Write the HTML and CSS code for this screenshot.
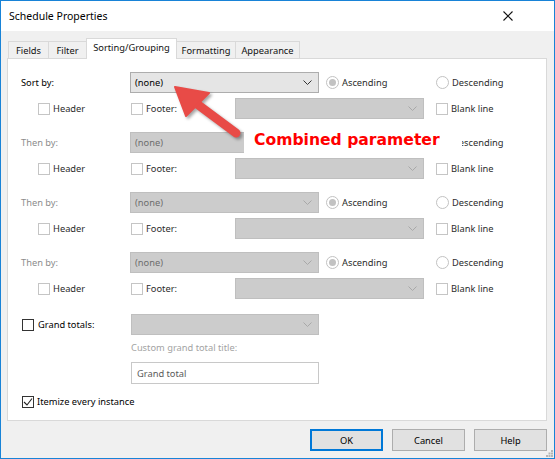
FILE: index.html
```html
<!DOCTYPE html>
<html lang="en">
<head>
  <meta charset="UTF-8">
  <title>Schedule Properties</title>
  <link rel="stylesheet" href="styles.css">
</head>
<body>
  <div class="window">
    <div class="titlebar">
      <span class="title">Schedule Properties</span>
      <svg class="close" width="10" height="10" viewBox="0 0 10 10">
        <path d="M0.5 0.5 L9.5 9.5 M9.5 0.5 L0.5 9.5" stroke="#111" stroke-width="1.1" fill="none"/>
      </svg>
    </div>

    <div class="body">
      <div class="tabs">
        <div class="tab tab-fields">Fields</div>
        <div class="tab tab-filter">Filter</div>
        <div class="tab tab-sorting active">Sorting/Grouping</div>
        <div class="tab tab-format">Formatting</div>
        <div class="tab tab-look">Appearance</div>
      </div>

      <div class="panel">
        <div class="groups">
          <!-- sort by -->
          <div class="group">
            <div class="row row-main">
              <span class="lbl">Sort by:</span>
              <div class="combo on"><span>(none)</span><svg class="chev" width="9" height="5" viewBox="0 0 9 5"><path d="M0.5 0.5 L4.5 4.5 L8.5 0.5" fill="none" stroke="#333"/></svg></div>
              <span class="radio"><span class="dot on"></span>Ascending</span>
              <span class="radio"><span class="dot"></span>Descending</span>
            </div>
            <div class="row row-sub">
              <span class="check c-header"><span class="box"></span>Header</span>
              <span class="check c-footer"><span class="box"></span>Footer:</span>
              <div class="combo wide"><span></span><svg class="chev" width="9" height="5" viewBox="0 0 9 5"><path d="M0.5 0.5 L4.5 4.5 L8.5 0.5" fill="none" stroke="#a8a8a8"/></svg></div>
              <span class="check"><span class="box"></span>Blank line</span>
            </div>
          </div>

          <div class="group">
            <div class="row row-main">
              <span class="lbl off">Then by:</span>
              <div class="combo"><span>(none)</span><svg class="chev" width="9" height="5" viewBox="0 0 9 5"><path d="M0.5 0.5 L4.5 4.5 L8.5 0.5" fill="none" stroke="#a8a8a8"/></svg></div>
              <span class="radio"><span class="dot on"></span>Ascending</span>
              <span class="radio"><span class="dot"></span>Descending</span>
            </div>
            <div class="row row-sub">
              <span class="check c-header"><span class="box"></span>Header</span>
              <span class="check c-footer"><span class="box"></span>Footer:</span>
              <div class="combo wide"><span></span><svg class="chev" width="9" height="5" viewBox="0 0 9 5"><path d="M0.5 0.5 L4.5 4.5 L8.5 0.5" fill="none" stroke="#a8a8a8"/></svg></div>
              <span class="check"><span class="box"></span>Blank line</span>
            </div>
          </div>

          <div class="group">
            <div class="row row-main">
              <span class="lbl off">Then by:</span>
              <div class="combo"><span>(none)</span><svg class="chev" width="9" height="5" viewBox="0 0 9 5"><path d="M0.5 0.5 L4.5 4.5 L8.5 0.5" fill="none" stroke="#a8a8a8"/></svg></div>
              <span class="radio"><span class="dot on"></span>Ascending</span>
              <span class="radio"><span class="dot"></span>Descending</span>
            </div>
            <div class="row row-sub">
              <span class="check c-header"><span class="box"></span>Header</span>
              <span class="check c-footer"><span class="box"></span>Footer:</span>
              <div class="combo wide"><span></span><svg class="chev" width="9" height="5" viewBox="0 0 9 5"><path d="M0.5 0.5 L4.5 4.5 L8.5 0.5" fill="none" stroke="#a8a8a8"/></svg></div>
              <span class="check"><span class="box"></span>Blank line</span>
            </div>
          </div>

          <div class="group">
            <div class="row row-main">
              <span class="lbl off">Then by:</span>
              <div class="combo"><span>(none)</span><svg class="chev" width="9" height="5" viewBox="0 0 9 5"><path d="M0.5 0.5 L4.5 4.5 L8.5 0.5" fill="none" stroke="#a8a8a8"/></svg></div>
              <span class="radio"><span class="dot on"></span>Ascending</span>
              <span class="radio"><span class="dot"></span>Descending</span>
            </div>
            <div class="row row-sub">
              <span class="check c-header"><span class="box"></span>Header</span>
              <span class="check c-footer"><span class="box"></span>Footer:</span>
              <div class="combo wide"><span></span><svg class="chev" width="9" height="5" viewBox="0 0 9 5"><path d="M0.5 0.5 L4.5 4.5 L8.5 0.5" fill="none" stroke="#a8a8a8"/></svg></div>
              <span class="check"><span class="box"></span>Blank line</span>
            </div>
          </div>
        </div>

        <!-- grand totals -->
        <div class="totals">
          <div class="row">
            <span class="check c-totals"><span class="box on"></span>Grand totals:</span>
            <div class="combo short"><span></span><svg class="chev" width="9" height="5" viewBox="0 0 9 5"><path d="M0.5 0.5 L4.5 4.5 L8.5 0.5" fill="none" stroke="#a8a8a8"/></svg></div>
          </div>
          <div class="custom-title">Custom grand total title:</div>
          <div class="textbox">Grand total</div>
          <div class="itemize">
            <span class="check"><span class="box on">
              <svg width="10" height="10" viewBox="0 0 10 10"><path d="M1 5 L4 8 L9 1.5" fill="none" stroke="#222" stroke-width="1.1"/></svg>
            </span>Itemize every instance</span>
          </div>
        </div>

        <!-- annotation on top of the dialog -->
        <svg class="arrow" width="90" height="64" viewBox="162 78 90 64">
          <path d="M197 104 L236 133" stroke="#e84b47" stroke-width="9" stroke-linecap="round" fill="none"/>
          <path d="M175 87 L209 93 L186 116 Z" fill="#e84b47" stroke="#e84b47" stroke-width="2" stroke-linejoin="round"/>
        </svg>
        <div class="callout">Combined parameter</div>
      </div>

      <div class="buttons">
        <div class="btn primary">OK</div>
        <div class="btn">Cancel</div>
        <div class="btn">Help</div>
      </div>
    </div>

    <svg class="grip" width="7" height="7" viewBox="0 0 7 7">
      <rect x="5" y="0" width="2" height="2" fill="#b5b5b5"/>
      <rect x="2.5" y="2.5" width="2" height="2" fill="#b5b5b5"/>
      <rect x="5" y="2.5" width="2" height="2" fill="#b5b5b5"/>
      <rect x="0" y="5" width="2" height="2" fill="#b5b5b5"/>
      <rect x="2.5" y="5" width="2" height="2" fill="#b5b5b5"/>
      <rect x="5" y="5" width="2" height="2" fill="#b5b5b5"/>
    </svg>
  </div>
</body>
</html>
```

FILE: styles.css
```css
body {
  margin: 0;
  background: #fff;
}

.window {
  width: 555px;
  height: 459px;
  box-sizing: border-box;
  border: 1px solid #1883d7;
  background: #f0f0f0;
  display: flex;
  flex-direction: column;
  position: relative;
  font-family: "Noto Sans", "Open Sans", sans-serif;
  font-size: 9.3px;
  color: #000;
}

/* title bar */
.titlebar {
  height: 30px;
  flex: none;
  background: #fff;
  display: flex;
  align-items: center;
  justify-content: space-between;
  padding: 0 41px 0 8px;
}

.title {
  font-size: 10.5px;
  color: #000;
}

.close {
  display: block;
}

.body {
  flex: 1;
  padding: 7px 7px 0 6px;
}

/* tabs */
.tabs {
  display: flex;
  align-items: flex-end;
  height: 21px;
  margin-bottom: -1px;
  padding-left: 1px;
  position: relative;
  z-index: 1;
}

.tab {
  height: 17px;
  box-sizing: border-box;
  border: 1px solid #d9d9d9;
  border-bottom: none;
  margin-right: -1px;
  margin-bottom: 1px;
  background: #f0f0f0;
  display: flex;
  align-items: center;
  justify-content: center;
  padding-top: 1px;
  color: #111;
}

.tab.active {
  height: 21px;
  margin-bottom: 0;
  background: #fff;
  padding-top: 0;
  padding-bottom: 3px;
  position: relative;
}

.tab-fields { width: 41px; }
.tab-filter { width: 39px; }
.tab-sorting { width: 91px; }
.tab-format { width: 60px; }
.tab-look { width: 65px; }

/* main panel */
.panel {
  height: 363px;
  box-sizing: border-box;
  border: 1px solid #d9d9d9;
  background: #fff;
  padding: 13px 0 0 13px;
  position: relative;
}

.groups {
  display: flex;
  flex-direction: column;
  gap: 13px;
}

.group {
  display: flex;
  flex-direction: column;
  gap: 5px;
}

.row {
  display: flex;
  align-items: center;
  height: 21px;
}

.lbl {
  width: 109px;
  flex: none;
}

.lbl.off {
  color: #8c8c8c;
}

.row-sub {
  padding-left: 17px;
}

/* combos */
.combo {
  width: 189px;
  height: 21px;
  flex: none;
  box-sizing: border-box;
  border: 1px solid #bfbfbf;
  background: #cccccc;
  color: #6d6d6d;
  display: flex;
  align-items: center;
  justify-content: space-between;
  padding: 0 6px 0 4px;
}

.combo.on {
  background: #e5e5e5;
  border-color: #adadad;
  color: #000;
}

.combo.wide {
  margin-right: 12px;
}

.combo.short {
  width: 188px;
}

.chev {
  display: block;
}

.row-main .combo {
  margin-right: 7px;
}

/* radios */
.radio {
  display: flex;
  align-items: center;
  width: 110px;
  flex: none;
  color: #2b2b2b;
}

.dot {
  width: 13px;
  height: 13px;
  box-sizing: border-box;
  border: 1px solid #c2c2c2;
  border-radius: 50%;
  background: #fff;
  margin-right: 3px;
  display: flex;
  align-items: center;
  justify-content: center;
}

.dot.on::after {
  content: "";
  width: 7px;
  height: 7px;
  border-radius: 50%;
  background: #c2c2c2;
}

/* checkboxes */
.check {
  display: flex;
  align-items: center;
  color: #2b2b2b;
  flex: none;
}

.box {
  width: 12px;
  height: 12px;
  box-sizing: border-box;
  border: 1px solid #c5c5c5;
  background: #fff;
  margin-right: 3px;
  display: flex;
  align-items: center;
  justify-content: center;
}

.box.on {
  border-color: #333;
}

.box svg {
  display: block;
}

.c-header {
  width: 93px;
}

.c-footer {
  width: 104px;
}

/* grand totals */
.totals {
  margin-top: 15px;
}

.totals .row {
  padding-left: 1px;
}

.c-totals {
  width: 109px;
  color: #000;
}

.c-totals .box {
  margin-right: 4px;
}

.custom-title {
  margin: 6px 0 7px 110px;
  line-height: 14px;
  color: #a3a3a3;
}

.textbox {
  width: 188px;
  height: 22px;
  box-sizing: border-box;
  margin-left: 110px;
  border: 1px solid #c8c8c8;
  padding-left: 5px;
  display: flex;
  align-items: center;
  color: #5a5a5a;
}

.itemize {
  margin-top: 11px;
  padding-left: 1px;
}

.itemize .check {
  color: #000;
}

/* red annotation */
.arrow {
  position: absolute;
  left: 154px;
  top: 19px;
  filter: drop-shadow(2px 2px 1.5px rgba(0, 0, 0, 0.35));
}

.callout {
  position: absolute;
  left: 236px;
  top: 70px;
  width: 218px;
  height: 27px;
  box-sizing: border-box;
  background: #fff;
  padding: 1px 0 0 10px;
  line-height: 20px;
  font-family: "DejaVu Sans", sans-serif;
  font-weight: bold;
  font-size: 15.6px;
  color: #ff0000;
}

/* dialog buttons */
.buttons {
  display: flex;
  justify-content: flex-end;
  gap: 9px;
  margin-top: 8px;
}

.btn {
  width: 73px;
  height: 22px;
  box-sizing: border-box;
  border: 1px solid #adadad;
  background: #e1e1e1;
  display: flex;
  align-items: center;
  justify-content: center;
}

.btn.primary {
  border: 2px solid #0078d7;
}

.grip {
  position: absolute;
  right: 1px;
  bottom: 1px;
}
```
